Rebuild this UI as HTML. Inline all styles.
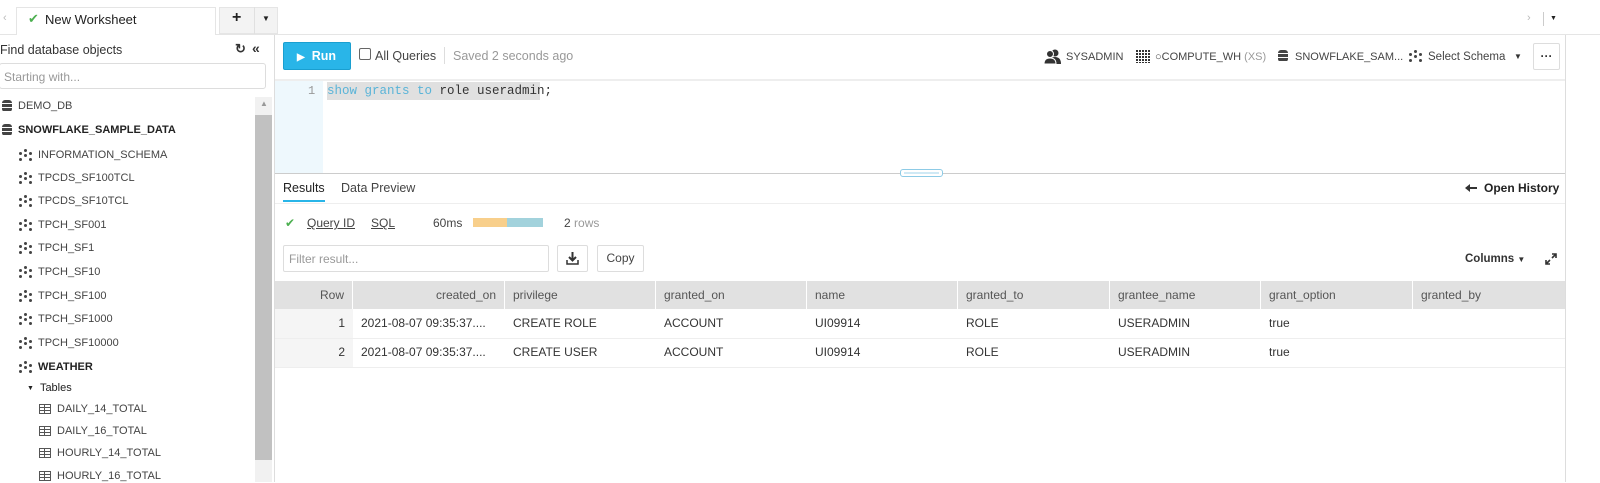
<!DOCTYPE html>
<html><head><style>
*{box-sizing:border-box;margin:0;padding:0}
body{width:1600px;height:482px;overflow:hidden;background:#fff;font-family:"Liberation Sans",sans-serif;font-size:12px;color:#333;position:relative}
.a{position:absolute}
.ti{position:absolute;left:0;font-size:11px;color:#444;white-space:nowrap;display:flex;align-items:center;height:14px}
.sch{display:inline-block;width:14px;height:12px;margin-right:5px;position:relative;flex:none}
.sch i{position:absolute;width:3px;height:3px;border-radius:50%;background:#444}
.db{display:inline-block;width:10px;height:12px;margin-right:6px;background:repeating-linear-gradient(#444 0 3px,#fff 3px 4px);border-radius:3px;flex:none}
.tb{display:inline-block;width:12px;height:10px;margin-right:6px;border:1px solid #555;background:linear-gradient(#555,#555) 0 2px/100% 1px no-repeat,linear-gradient(#555,#555) 0 5px/100% 1px no-repeat,linear-gradient(#555,#555) 4px 0/1px 100% no-repeat;flex:none}
.hc{position:absolute;top:281px;height:28px;background:#e1e1e1;border-right:1px solid #fff;font-size:12px;color:#555;line-height:28px;padding:0 8px}
.c{position:absolute;height:29px;line-height:29px;font-size:12px;color:#333;padding:0 8px;white-space:nowrap}
</style></head><body>
<!-- tab bar -->
<div class="a" style="left:0;top:34px;width:1600px;height:1px;background:#e5e5e5"></div>
<div class="a" style="left:3px;top:12px;color:#bbb;font-size:11px">‹</div>
<div class="a" style="left:16px;top:7px;width:200px;height:28px;background:#fff;border:1px solid #e5e5e5;border-bottom:none"></div>
<div class="a" style="left:28px;top:11px;color:#4caf50;font-size:13px">✔</div>
<div class="a" style="left:45px;top:12px;font-size:13px;color:#222">New Worksheet</div>
<div class="a" style="left:219px;top:7px;width:59px;height:27px;background:#f3f3f3;border:1px solid #e5e5e5"></div>
<div class="a" style="left:254px;top:7px;width:1px;height:27px;background:#e0e0e0"></div>
<div class="a" style="left:232px;top:9px;font-size:16px;font-weight:bold;color:#222">+</div>
<div class="a" style="left:262px;top:14px;font-size:8px;color:#222">▼</div>
<div class="a" style="left:1527px;top:12px;color:#bbb;font-size:11px">›</div>
<div class="a" style="left:1543px;top:12px;width:1px;height:14px;background:#ccc"></div>
<div class="a" style="left:1550px;top:15px;font-size:7px;color:#222">▼</div>
<!-- left panel -->
<div class="a" style="left:0;top:43px;font-size:12.5px;color:#333">Find database objects</div>
<div class="a" style="left:235px;top:41px;font-size:13px;font-weight:bold">↻</div>
<div class="a" style="left:252px;top:40px;font-size:14px;font-weight:bold">«</div>
<div class="a" style="left:-1px;top:63px;width:267px;height:26px;border:1px solid #ddd;border-radius:3px"></div>
<div class="a" style="left:4px;top:70px;color:#999;font-size:12px">Starting with...</div>
<div class="a" style="left:255px;top:97px;width:17px;height:385px;background:#f1f1f1"></div>
<div class="a" style="left:255px;top:115px;width:17px;height:345px;background:#c1c1c1"></div>
<div class="a" style="left:260px;top:99px;font-size:8px;color:#999">▲</div>
<div class="a" style="left:274px;top:35px;width:1px;height:447px;background:#ddd"></div>
<div class="ti" style="top:99px;left:2px"><span class="db"></span>DEMO_DB</div>
<div class="ti" style="top:123px;left:2px;color:#222;font-weight:bold;font-size:11px"><span class="db"></span>SNOWFLAKE_SAMPLE_DATA</div>
<div class="ti" style="top:148px;left:19px"><span class="sch"><i style="left:5px;top:0"></i><i style="left:0;top:3px"></i><i style="left:10px;top:3px"></i><i style="left:5px;top:5px"></i><i style="left:0;top:9px"></i><i style="left:10px;top:9px"></i></span>INFORMATION_SCHEMA</div>
<div class="ti" style="top:171px;left:19px"><span class="sch"><i style="left:5px;top:0"></i><i style="left:0;top:3px"></i><i style="left:10px;top:3px"></i><i style="left:5px;top:5px"></i><i style="left:0;top:9px"></i><i style="left:10px;top:9px"></i></span>TPCDS_SF100TCL</div>
<div class="ti" style="top:194px;left:19px"><span class="sch"><i style="left:5px;top:0"></i><i style="left:0;top:3px"></i><i style="left:10px;top:3px"></i><i style="left:5px;top:5px"></i><i style="left:0;top:9px"></i><i style="left:10px;top:9px"></i></span>TPCDS_SF10TCL</div>
<div class="ti" style="top:218px;left:19px"><span class="sch"><i style="left:5px;top:0"></i><i style="left:0;top:3px"></i><i style="left:10px;top:3px"></i><i style="left:5px;top:5px"></i><i style="left:0;top:9px"></i><i style="left:10px;top:9px"></i></span>TPCH_SF001</div>
<div class="ti" style="top:241px;left:19px"><span class="sch"><i style="left:5px;top:0"></i><i style="left:0;top:3px"></i><i style="left:10px;top:3px"></i><i style="left:5px;top:5px"></i><i style="left:0;top:9px"></i><i style="left:10px;top:9px"></i></span>TPCH_SF1</div>
<div class="ti" style="top:265px;left:19px"><span class="sch"><i style="left:5px;top:0"></i><i style="left:0;top:3px"></i><i style="left:10px;top:3px"></i><i style="left:5px;top:5px"></i><i style="left:0;top:9px"></i><i style="left:10px;top:9px"></i></span>TPCH_SF10</div>
<div class="ti" style="top:289px;left:19px"><span class="sch"><i style="left:5px;top:0"></i><i style="left:0;top:3px"></i><i style="left:10px;top:3px"></i><i style="left:5px;top:5px"></i><i style="left:0;top:9px"></i><i style="left:10px;top:9px"></i></span>TPCH_SF100</div>
<div class="ti" style="top:312px;left:19px"><span class="sch"><i style="left:5px;top:0"></i><i style="left:0;top:3px"></i><i style="left:10px;top:3px"></i><i style="left:5px;top:5px"></i><i style="left:0;top:9px"></i><i style="left:10px;top:9px"></i></span>TPCH_SF1000</div>
<div class="ti" style="top:336px;left:19px"><span class="sch"><i style="left:5px;top:0"></i><i style="left:0;top:3px"></i><i style="left:10px;top:3px"></i><i style="left:5px;top:5px"></i><i style="left:0;top:9px"></i><i style="left:10px;top:9px"></i></span>TPCH_SF10000</div>
<div class="ti" style="top:360px;left:19px;color:#222;font-weight:bold"><span class="sch"><i style="left:5px;top:0"></i><i style="left:0;top:3px"></i><i style="left:10px;top:3px"></i><i style="left:5px;top:5px"></i><i style="left:0;top:9px"></i><i style="left:10px;top:9px"></i></span>WEATHER</div>
<div class="ti" style="top:381px;left:27px;color:#222"><span style="font-size:7px;margin-right:6px">▼</span>Tables</div>
<div class="ti" style="top:402px;left:39px"><span class="tb"></span>DAILY_14_TOTAL</div>
<div class="ti" style="top:424px;left:39px"><span class="tb"></span>DAILY_16_TOTAL</div>
<div class="ti" style="top:446px;left:39px"><span class="tb"></span>HOURLY_14_TOTAL</div>
<div class="ti" style="top:469px;left:39px"><span class="tb"></span>HOURLY_16_TOTAL</div>
<!-- right border -->
<div class="a" style="left:1565px;top:35px;width:1px;height:447px;background:#ddd"></div>
<!-- toolbar -->
<div class="a" style="left:283px;top:42px;width:68px;height:28px;background:#29b5e8;border:1px solid #1a9fd0;border-radius:2px;color:#fff;font-weight:bold;font-size:12.5px;line-height:26px;padding-left:13px"><span style="font-size:10px;margin-right:7px">▶</span>Run</div>
<div class="a" style="left:359px;top:48px;width:12px;height:12px;border:1px solid #666;border-radius:2px"></div>
<div class="a" style="left:375px;top:49px;font-size:12.5px;color:#444">All Queries</div>
<div class="a" style="left:444px;top:47px;width:1px;height:17px;background:#ddd"></div>
<div class="a" style="left:453px;top:49px;font-size:12.5px;color:#999">Saved 2 seconds ago</div>
<svg class="a" style="left:1044px;top:49px" width="18" height="15" viewBox="0 0 18 15"><circle cx="11" cy="4" r="3.5" fill="#333"/><path d="M5 15 Q5 8 11 8 Q17 8 17 15Z" fill="#333"/><circle cx="6" cy="5" r="3.5" fill="#333" stroke="#fff"/><path d="M0 15 Q0 9 6 9 Q12 9 12 15Z" fill="#333" stroke="#fff"/></svg>
<div class="a" style="left:1066px;top:51px;font-size:11px;color:#444">SYSADMIN</div>
<div class="a" style="left:1136px;top:50px;width:14px;height:13px;background:repeating-linear-gradient(90deg,#333 0 2px,#fff 2px 3px);-webkit-mask:repeating-linear-gradient(#000 0 2px,transparent 2px 3px)"></div>
<div class="a" style="left:1155px;top:51px;font-size:11px;color:#444">○COMPUTE_WH <span style="color:#999">(XS)</span></div>
<div class="a" style="left:1278px;top:50px;display:flex"><span class="db"></span></div>
<div class="a" style="left:1295px;top:51px;font-size:11px;color:#444">SNOWFLAKE_SAM...</div>
<div class="a" style="left:1409px;top:50px;display:flex"><span class="sch"><i style="left:5px;top:0"></i><i style="left:0;top:3px"></i><i style="left:10px;top:3px"></i><i style="left:5px;top:5px"></i><i style="left:0;top:9px"></i><i style="left:10px;top:9px"></i></span></div>
<div class="a" style="left:1428px;top:51px;font-size:11.5px;color:#444">Select Schema</div>
<div class="a" style="left:1514px;top:52px;font-size:8px;color:#333">▼</div>
<div class="a" style="left:1533px;top:43px;width:27px;height:27px;border:1px solid #ddd;border-radius:2px;text-align:center;font-weight:bold;line-height:25px;font-size:12px">···</div>
<div class="a" style="left:275px;top:79px;width:1290px;height:2px;background:#eee"></div>
<!-- editor -->
<div class="a" style="left:275px;top:81px;width:48px;height:92px;background:#eef8fd"></div>
<div class="a" style="left:308px;top:84px;font-family:'Liberation Mono',monospace;font-size:12px;color:#999">1</div>
<div class="a" style="left:327px;top:82px;height:18px;width:213px;background:#e0e0e0"></div>
<div class="a" style="left:327px;top:84px;font-family:'Liberation Mono',monospace;font-size:12.5px;color:#333;white-space:pre"><span style="color:#5ab4d8">show grants to</span> role useradmin;</div>
<div class="a" style="left:275px;top:173px;width:1290px;height:1px;background:#ccc"></div>
<div class="a" style="left:900px;top:169px;width:43px;height:8px;border:1px solid #8dcbe6;border-radius:3px;background:#fff"></div>
<div class="a" style="left:904px;top:172px;width:35px;height:2px;background:#cfe9f5"></div>
<!-- results -->
<div class="a" style="left:283px;top:181px;font-size:12.5px;color:#222">Results</div>
<div class="a" style="left:283px;top:200px;width:42px;height:2px;background:#29b5e8"></div>
<div class="a" style="left:341px;top:181px;font-size:12.5px;color:#444">Data Preview</div>
<div class="a" style="left:275px;top:203px;width:1290px;height:1px;background:#eee"></div>
<svg class="a" style="left:1465px;top:184px" width="12" height="8" viewBox="0 0 12 8"><path d="M0 4 L5 0 L5 3 L12 3 L12 5 L5 5 L5 8Z" fill="#333"/></svg>
<div class="a" style="left:1484px;top:181px;font-size:12px;color:#222;font-weight:bold">Open History</div>
<div class="a" style="left:285px;top:216px;color:#4caf50;font-size:12px">✔</div>
<div class="a" style="left:307px;top:216px;text-decoration:underline;color:#444">Query ID</div>
<div class="a" style="left:371px;top:216px;text-decoration:underline;color:#444">SQL</div>
<div class="a" style="left:433px;top:216px;color:#444">60ms</div>
<div class="a" style="left:473px;top:218px;width:34px;height:9px;background:#f8cf8b"></div>
<div class="a" style="left:507px;top:218px;width:36px;height:9px;background:#a2d2dc"></div>
<div class="a" style="left:564px;top:216px;color:#999"><span style="color:#444">2</span> rows</div>
<div class="a" style="left:283px;top:245px;width:266px;height:27px;border:1px solid #ddd;border-radius:2px"></div>
<div class="a" style="left:289px;top:252px;color:#999">Filter result...</div>
<div class="a" style="left:557px;top:245px;width:31px;height:27px;border:1px solid #ddd;border-radius:2px"></div>
<svg class="a" style="left:566px;top:252px" width="13" height="13" viewBox="0 0 13 13"><path d="M6.5 0 V8 M3 5 L6.5 8.5 L10 5" stroke="#333" stroke-width="2" fill="none"/><path d="M1 8 V12 H12 V8" stroke="#333" stroke-width="1.5" fill="none"/></svg>
<div class="a" style="left:597px;top:245px;width:47px;height:27px;border:1px solid #ddd;border-radius:2px;text-align:center;line-height:25px;color:#444">Copy</div>
<div class="a" style="left:1465px;top:253px;font-weight:bold;color:#333;font-size:11.5px">Columns <span style="font-size:8px">▼</span></div>
<svg class="a" style="left:1545px;top:253px" width="12" height="12" viewBox="0 0 12 12"><path d="M7 1 H11 V5 M11 1 L7 5 M5 11 H1 V7 M1 11 L5 7" stroke="#333" stroke-width="1.6" fill="none"/></svg>
<!-- table -->
<div class="a" style="left:275px;top:309px;width:78px;height:58px;background:#f5f5f5"></div>
<div class="hc" style="left:275px;width:78px;text-align:right">Row</div>
<div class="hc" style="left:353px;width:152px;text-align:right">created_on</div>
<div class="hc" style="left:505px;width:151px">privilege</div>
<div class="hc" style="left:656px;width:151px">granted_on</div>
<div class="hc" style="left:807px;width:151px">name</div>
<div class="hc" style="left:958px;width:152px">granted_to</div>
<div class="hc" style="left:1110px;width:151px">grantee_name</div>
<div class="hc" style="left:1261px;width:152px">grant_option</div>
<div class="hc" style="left:1413px;width:152px;border-right:none">granted_by</div>
<div class="a" style="left:275px;top:338px;width:1290px;height:1px;background:#eee"></div>
<div class="a" style="left:275px;top:367px;width:1290px;height:1px;background:#eee"></div>
<div class="c" style="left:275px;top:309px;width:78px;text-align:right">1</div>
<div class="c" style="left:353px;top:309px">2021-08-07 09:35:37....</div>
<div class="c" style="left:505px;top:309px">CREATE ROLE</div>
<div class="c" style="left:656px;top:309px">ACCOUNT</div>
<div class="c" style="left:807px;top:309px">UI09914</div>
<div class="c" style="left:958px;top:309px">ROLE</div>
<div class="c" style="left:1110px;top:309px">USERADMIN</div>
<div class="c" style="left:1261px;top:309px">true</div>
<div class="c" style="left:275px;top:338px;width:78px;text-align:right">2</div>
<div class="c" style="left:353px;top:338px">2021-08-07 09:35:37....</div>
<div class="c" style="left:505px;top:338px">CREATE USER</div>
<div class="c" style="left:656px;top:338px">ACCOUNT</div>
<div class="c" style="left:807px;top:338px">UI09914</div>
<div class="c" style="left:958px;top:338px">ROLE</div>
<div class="c" style="left:1110px;top:338px">USERADMIN</div>
<div class="c" style="left:1261px;top:338px">true</div>
</body></html>
